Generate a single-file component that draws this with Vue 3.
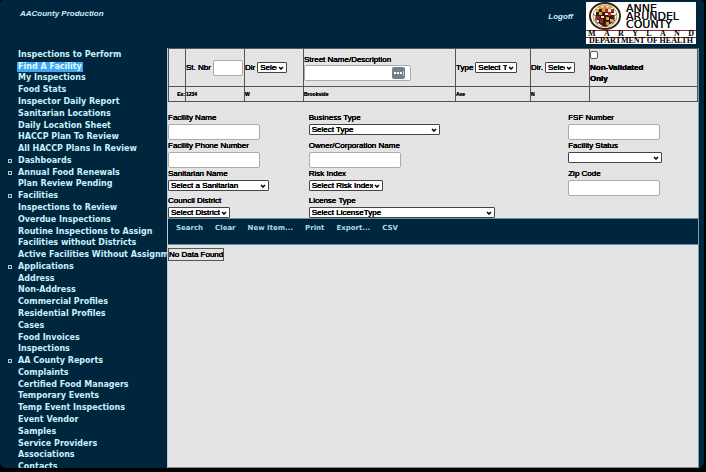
<template>
  <div class="window">
    <header class="topbar">
      <h1 class="site-name">AACounty Production</h1>
      <a href="#" class="logoff">Logoff</a>
      <div class="logo">
        <svg class="seal" viewBox="0 0 36 28" aria-hidden="true">
          <ellipse cx="19" cy="14" rx="15" ry="13" fill="#fff" stroke="#3a2413" stroke-width="2" />
          <ellipse cx="19" cy="14" rx="12" ry="11" fill="none" stroke="#b79a62" stroke-width="1" />
          <path d="M12 4h3l1 2 3-3 3 3 1-2h3l-2 4H14z" fill="#c9982f" />
          <path d="M10 7h18v9c0 4-4 7-9 9-5-2-9-5-9-9z" fill="#3b1714" />
          <path d="M10 7h3v3h-3zM16 7h3v3h-3zM13 10h3v3h-3z" fill="#d9a62f" />
          <path d="M19 7h3v3h-3zM25 7h3v3h-3zM22 10h3v4h-3z" fill="#b02a2c" />
          <path d="M22 7h3v3h-3zM19 11h3v2h-3zM25 11h3v2h-3z" fill="#f2e6da" />
          <path d="M10 14h4v3h-4zM14 17h3v4h-3z" fill="#a52428" />
          <path d="M15 14h3v2h-3zM11 18h2v2h-2z" fill="#f2e6da" />
          <path d="M20 15h3v3h-3zM24 17h3v3h-3zM20 20h3v3h-3z" fill="#d9a62f" />
          <path d="M7 12l3 2-1 4 3 4M31 12l-3 2 1 4-3 4" fill="none" stroke="#6d4a24" stroke-width="1" />
        </svg>
        <div class="logo-name">
          <span>ANNE</span>
          <span>ARUNDEL</span>
          <span>COUNTY</span>
        </div>
        <div class="logo-state">
          <span v-for="(letter, i) in 'MARYLAND'" :key="i">{{ letter }}</span>
        </div>
        <div class="logo-dept">DEPARTMENT OF HEALTH</div>
      </div>
    </header>

    <div class="content">
      <nav class="sidebar">
        <ul>
          <li v-for="item in menu" :key="item" :class="{ active: item === current }">
            <i v-if="groups.includes(item)" class="expander"></i>
            <a href="#" @click.prevent="current = item">{{ item }}</a>
          </li>
        </ul>
      </nav>

      <main class="panel">
        <table class="address">
          <colgroup>
            <col class="c-ex" />
            <col class="c-small" />
            <col class="c-small" />
            <col class="c-street" />
            <col class="c-type" />
            <col class="c-small" />
            <col />
          </colgroup>
          <tbody>
            <tr class="fields">
              <td></td>
              <td>
                <div class="inline">
                  <label for="nbr">St. Nbr</label>
                  <input id="nbr" type="text" class="w-xs" />
                </div>
              </td>
              <td>
                <div class="inline">
                  <label for="dir1">Dir</label>
                  <span class="select w-xs">
                    <select id="dir1"><option>Select</option></select>
                    <svg viewBox="0 0 6 4"><path d="M1 1l2 2 2-2" /></svg>
                  </span>
                </div>
              </td>
              <td>
                <label for="street" class="street-label">Street Name/Description</label>
                <div class="street">
                  <input id="street" type="text" />
                  <button type="button" aria-label="Fill"><i></i><i></i><i></i><b></b></button>
                </div>
              </td>
              <td>
                <div class="inline">
                  <label for="type">Type</label>
                  <span class="select w-sm">
                    <select id="type"><option>Select Type</option></select>
                    <svg viewBox="0 0 6 4"><path d="M1 1l2 2 2-2" /></svg>
                  </span>
                </div>
              </td>
              <td>
                <div class="inline">
                  <label for="dir2">Dir.</label>
                  <span class="select w-xs">
                    <select id="dir2"><option>Select</option></select>
                    <svg viewBox="0 0 6 4"><path d="M1 1l2 2 2-2" /></svg>
                  </span>
                </div>
              </td>
              <td class="validated">
                <input id="nonval" type="checkbox" />
                <label for="nonval">Non-Validated<br />Only</label>
              </td>
            </tr>
            <tr class="examples">
              <td class="right">Ex:</td>
              <td>1234</td>
              <td>W</td>
              <td>Brookside</td>
              <td>Ave</td>
              <td>N</td>
              <td></td>
            </tr>
          </tbody>
        </table>

        <form class="search" @submit.prevent>
          <div v-for="f in fields" :key="f.id" class="field" :class="f.col">
            <label :for="f.id">{{ f.label }}</label>
            <span v-if="f.type === 'select'" class="select" :class="f.size">
              <select :id="f.id"><option>{{ f.text }}</option></select>
              <svg viewBox="0 0 6 4"><path d="M1 1l2 2 2-2" /></svg>
            </span>
            <input v-else :id="f.id" type="text" class="w-md" />
          </div>
        </form>

        <div class="toolbar">
          <button v-for="action in actions" :key="action" type="button">{{ action }}</button>
        </div>

        <p class="no-data">No Data Found</p>
      </main>
    </div>
  </div>
</template>

<script setup>
import { ref } from "vue";

const current = ref("Find A Facility");

const menu = [
  "Inspections to Perform",
  "Find A Facility",
  "My Inspections",
  "Food Stats",
  "Inspector Daily Report",
  "Sanitarian Locations",
  "Daily Location Sheet",
  "HACCP Plan To Review",
  "All HACCP Plans In Review",
  "Dashboards",
  "Annual Food Renewals",
  "Plan Review Pending",
  "Facilities",
  "Inspections to Review",
  "Overdue Inspections",
  "Routine Inspections to Assign",
  "Facilities without Districts",
  "Active Facilities Without Assignments",
  "Applications",
  "Address",
  "Non-Address",
  "Commercial Profiles",
  "Residential Profiles",
  "Cases",
  "Food Invoices",
  "Inspections",
  "AA County Reports",
  "Complaints",
  "Certified Food Managers",
  "Temporary Events",
  "Temp Event Inspections",
  "Event Vendor",
  "Samples",
  "Service Providers",
  "Associations",
  "Contacts",
];

// entries with an expand box in front
const groups = [
  "Dashboards",
  "Annual Food Renewals",
  "Facilities",
  "Applications",
  "AA County Reports",
];

const fields = [
  { id: "name", label: "Facility Name", col: "first" },
  { id: "business", label: "Business Type", col: "second", type: "select", text: "Select Type", size: "w-xl" },
  { id: "fsf", label: "FSF Number", col: "third" },
  { id: "phone", label: "Facility Phone Number", col: "first" },
  { id: "owner", label: "Owner/Corporation Name", col: "second" },
  { id: "status", label: "Facility Status", col: "third", type: "select", text: "", size: "w-status" },
  { id: "sanitarian", label: "Sanitarian Name", col: "first", type: "select", text: "Select a Sanitarian", size: "w-lg" },
  { id: "risk", label: "Risk Index", col: "second", type: "select", text: "Select Risk Index", size: "w-risk" },
  { id: "zip", label: "Zip Code", col: "third" },
  { id: "district", label: "Council District", col: "first", type: "select", text: "Select District", size: "w-district" },
  { id: "license", label: "License Type", col: "second", type: "select", text: "Select LicenseType", size: "w-xxl" },
];

const actions = ["Search", "Clear", "New Item...", "Print", "Export...", "CSV"];
</script>

<style>
body {
  margin: 0;
  background: #000;
}
</style>

<style scoped>
* {
  box-sizing: border-box;
}

.window {
  display: flex;
  flex-direction: column;
  height: calc(100vh - 4px);
  margin-right: 2px;
  overflow: hidden;
  background: #00263e;
  border-radius: 4px 4px 6px 6px;
  font-family: "Liberation Sans", Arial, sans-serif;
  font-size: 8px;
  line-height: 11px;
  color: #000;
}

.topbar {
  display: flex;
  flex: none;
  align-items: flex-start;
  height: 48px;
  padding: 2px 8px 0 20px;
}

.site-name,
.logoff {
  margin: 0;
  font-size: 8px;
  font-weight: bold;
  font-style: italic;
  line-height: 12px;
  color: #c9eef8;
  text-decoration: none;
}

.site-name {
  flex: 1;
  padding-top: 6px;
}

.logoff {
  padding: 9px 13px 0 0;
}

.logo {
  display: grid;
  grid-template-columns: 36px 1fr;
  grid-template-rows: 28px 8px 6px;
  width: 110px;
  height: 42px;
  overflow: hidden;
  background: #fff;
}

.seal {
  width: 36px;
  height: 28px;
}

.logo-name {
  display: flex;
  flex-direction: column;
  padding: 3px 0 0 4px;
  font-family: "DejaVu Sans", sans-serif;
  font-size: 11px;
  line-height: 8px;
  color: #111;
  text-shadow: 0 0 0 #111;
}

.logo-state {
  display: flex;
  grid-column: 1 / -1;
  justify-content: space-between;
  padding: 0 2px;
  border-top: 1px solid #8f2b35;
  border-bottom: 1px solid #8f2b35;
  font-family: "Liberation Serif", serif;
  font-size: 8px;
  font-weight: bold;
  line-height: 6px;
}

.logo-dept {
  grid-column: 1 / -1;
  font-family: "Liberation Serif", serif;
  font-size: 8px;
  line-height: 6px;
  font-weight: bold;
  text-align: center;
  white-space: nowrap;
}

.content {
  display: grid;
  flex: 1;
  grid-template-columns: 167px minmax(0, 1fr);
  min-height: 0;
}

.sidebar {
  min-width: 0;
  padding-top: 1px;
  overflow: hidden;
}

.sidebar ul {
  display: grid;
  grid-template-rows: repeat(36, minmax(0, 1fr));
  height: calc(100vh - 48px);
  margin: 0;
  padding: 0;
  list-style: none;
}

.sidebar li {
  display: grid;
  grid-template-columns: 9px auto;
  align-items: center;
  justify-content: start;
  padding-left: 8px;
}

.sidebar a {
  grid-column: 2;
  padding: 0 1px;
  font-family: "DejaVu Sans", Verdana, sans-serif;
  font-size: 8px;
  font-weight: bold;
  line-height: 10px;
  color: #c5f3fb;
  text-decoration: none;
  white-space: nowrap;
}

.sidebar .active a {
  background: #3ba9f4;
  color: #e4f8ff;
}

.expander {
  width: 4px;
  height: 4px;
  border: 1px solid #b9c4c8;
  background: #26343c;
}

.panel {
  min-width: 0;
  margin-right: 5px;
  background: #e4e4e4;
  border-left: 1px solid #b5ced8;
  border-right: 1px solid #64a3b4;
  border-bottom: 1px solid #8c8c8c;
}

.address {
  width: 100%;
  border-collapse: collapse;
  table-layout: fixed;
}

.address td {
  padding: 0;
  border: 1px solid #555;
}

.c-ex {
  width: 17px;
}

.c-small {
  width: 59px;
}

.c-street {
  width: 152px;
}

.c-type {
  width: 75px;
}

.fields td {
  height: 38px;
}

.examples td {
  height: 15px;
  font-size: 5px;
  font-weight: bold;
  line-height: 6px;
  text-shadow: 0 0 0 #000;
}

.examples .right {
  text-align: right;
}

/* thickens the strokes without widening the letters */
label,
select,
.no-data {
  text-shadow: 0 0 0 #000, 0 0 0 #000;
}

.inline {
  display: flex;
  align-items: center;
  gap: 2px;
  white-space: nowrap;
}

.street-label {
  display: block;
}

.street {
  display: flex;
  align-items: center;
  width: 107px;
  height: 16px;
  padding-right: 5px;
  background: #fff;
  border: 1px solid #aaa;
  border-radius: 2px;
}

.street button {
  display: flex;
  align-items: center;
  justify-content: center;
  gap: 1px;
  width: 13px;
  height: 12px;
  padding: 0;
  background: #71808e;
  border: 0;
  border-radius: 2px;
}

.street i {
  width: 2px;
  height: 2px;
  background: #fff;
}

.street b {
  width: 1px;
  height: 5px;
  background: #c3cbd2;
}

.address .validated {
  vertical-align: top;
}

.validated input {
  display: block;
  width: 8px;
  height: 8px;
  margin: 2px 0 3px;
  appearance: none;
  background: #fff;
  border: 1px solid #555;
  border-radius: 2px;
}

.validated label {
  display: block;
  font-weight: bold;
}

input[type="text"] {
  height: 16px;
  padding: 0 4px;
  font: inherit;
  background: #fff;
  border: 1px solid #aaa;
  border-radius: 2px;
}

.street input[type="text"] {
  flex: 1;
  min-width: 0;
  height: 14px;
  border: 0;
}

.select {
  display: grid;
  align-items: center;
  height: 11px;
}

.select select,
.select svg {
  grid-area: 1 / 1;
}

.select select {
  width: 100%;
  height: 11px;
  margin: 0;
  padding: 0 9px 0 2px;
  appearance: none;
  font: inherit;
  line-height: 9px;
  color: #000;
  background: #fff;
  border: 1px solid #444;
  border-radius: 1px;
}

.select svg {
  justify-self: end;
  width: 6px;
  height: 4px;
  margin-right: 3px;
  fill: none;
  stroke: #000;
  stroke-width: 1.5;
  pointer-events: none;
}

.w-xs {
  width: 30px;
}

.w-sm {
  width: 42px;
}

.w-md {
  width: 92px;
}

.w-status {
  width: 94px;
}

.w-lg {
  width: 101px;
}

.w-xl {
  width: 131px;
}

.w-xxl {
  width: 186px;
}

.w-risk {
  width: 74px;
}

.w-district {
  width: 62px;
}

.search {
  display: grid;
  grid-template-columns: 141fr 260fr 130fr;
  grid-template-rows: 28px 28px 27px 23px;
  padding-top: 10px;
}

.field label {
  display: block;
  height: 12px;
  line-height: 12px;
}

.first {
  grid-column: 1;
}

.second {
  grid-column: 2;
}

.third {
  grid-column: 3;
}

.field input {
  display: block;
}

.toolbar {
  display: flex;
  align-items: flex-start;
  gap: 12px;
  height: 27px;
  padding: 4px 8px;
  background: #00263e;
  border-top: 1px solid #5d93a5;
  border-bottom: 1px solid #5d93a5;
}

.toolbar button {
  padding: 0;
  background: none;
  border: 0;
  font-family: "DejaVu Sans", Verdana, sans-serif;
  font-size: 7px;
  font-weight: bold;
  line-height: 10px;
  color: #a9dcec;
  cursor: pointer;
}

.no-data {
  width: fit-content;
  margin: 3px 0 0;
  border: 1px solid #555;
}
</style>
